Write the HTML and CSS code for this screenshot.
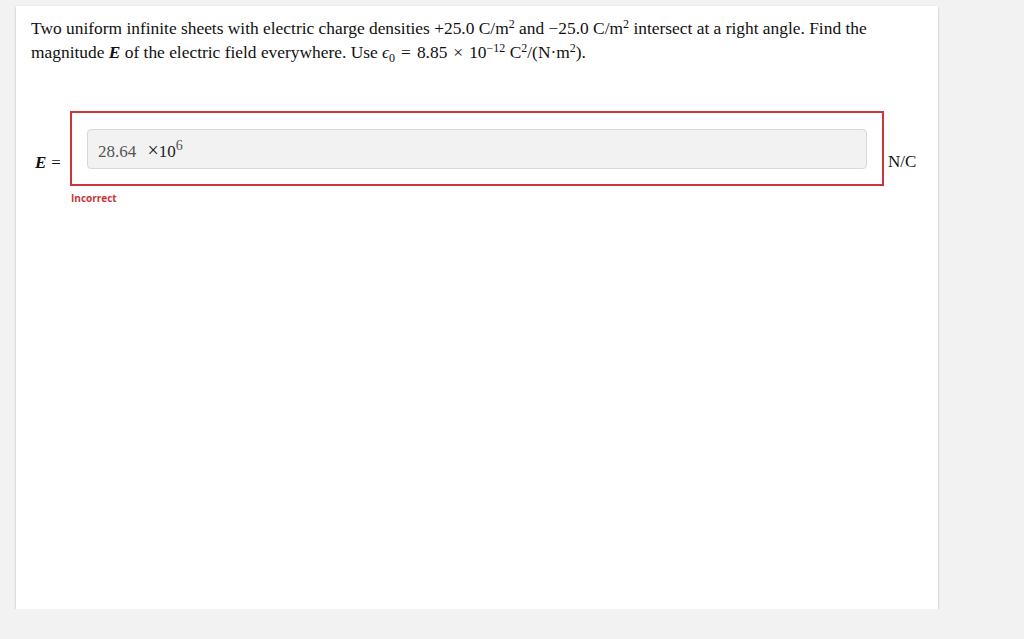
FILE: index.html
```html
<!DOCTYPE html>
<html lang="en">
<head>
    <meta charset="UTF-8">
    <meta name="viewport" content="width=device-width, initial-scale=1.0">
    <title>Question</title>
    <link rel="stylesheet" href="styles.css">
</head>
<body>
    <div class="page">
        <div class="card">
            <p class="question">
                Two uniform infinite sheets with electric charge densities +25.0&nbsp;C/m<sup>2</sup> and &minus;25.0&nbsp;C/m<sup>2</sup> intersect at a right angle. Find the magnitude <i class="var">E</i> of the electric field everywhere. Use <i>&#x03F5;</i><sub>0</sub><span class="op">=</span>8.85<span class="op">&times;</span>10<sup>&minus;12</sup> C<sup>2</sup>/(N&middot;m<sup>2</sup>).
            </p>
            <!-- answer row -->
            <div class="answer">
                <span class="label"><i class="var">E</i><span class="eq">=</span></span>
                <div class="box">
                    <div class="field">28.64 <span class="times"><span class="x">&times;</span>10<sup>6</sup></span></div>
                </div>
                <span class="unit">N/C</span>
            </div>
            <div class="feedback">Incorrect</div>
        </div>
    </div>
</body>
</html>
```

FILE: styles.css
```css
body {
    margin: 0;
    background: #f2f2f2;
    font-family: "Liberation Serif", "Times New Roman", serif;
    color: #111;
}
.page {
    padding: 6px 0 0 16px;
}
.card {
    width: 922px;
    height: 603px;
    box-sizing: border-box;
    padding: 10px 15px;
    background: #fff;
    box-shadow: 0 1px 2px rgba(0, 0, 0, 0.28);
}
.question {
    margin: 0;
    font-size: 17.4px;
    line-height: 24px;
}
.question sup,
.question sub {
    font-size: 12px;
    line-height: 0;
}
.question sup {
    vertical-align: 6px;
}
.op {
    margin: 0 6px;
}
.var {
    font-weight: bold;
}
.answer {
    display: flex;
    align-items: center;
    margin-top: 47px;
}
.label {
    width: 39px;
    box-sizing: border-box;
    padding: 28px 7px 0 4px;
    font-size: 17px;
    white-space: nowrap;
}
.label .eq {
    margin-left: 5px;
}
.box {
    width: 814px;
    box-sizing: border-box;
    border: 2px solid #c8363b;
    padding: 16px 15px 15px;
}
.field {
    height: 40px;
    box-sizing: border-box;
    border: 1px solid #d8d8d8;
    border-radius: 4px;
    background: #f2f2f2;
    padding: 8px 10px 0;
    font-size: 17px;
    line-height: 24px;
    color: #555;
}
.field .times {
    margin-left: 7px;
    color: #222;
}
.field .x {
    font-size: 20px;
}
.field sup {
    font-size: 14px;
    line-height: 0;
    color: #555;
}
.unit {
    margin-left: 4px;
    padding-top: 26px;
    font-size: 17px;
}
.feedback {
    margin: 5px 0 0 40px;
    font-family: "Open Sans", sans-serif;
    font-weight: bold;
    font-size: 10px;
    line-height: 14px;
    color: #c8363b;
}
```
